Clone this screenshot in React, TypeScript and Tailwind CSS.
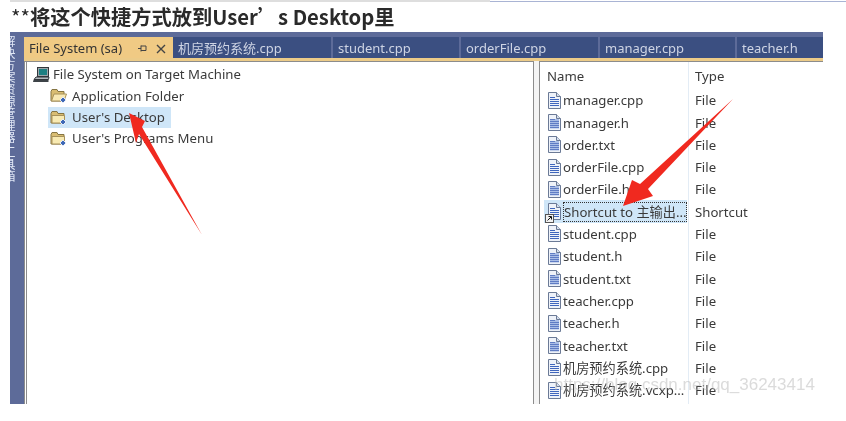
const UI = "font-['Noto_Sans','Noto_Sans_CJK_SC',sans-serif]";

function Doc({ dense }: { dense?: boolean }) {
  return (
    <svg width="14" height="17" viewBox="0 0 14 17" className="shrink-0">
      <path d="M1.5.5H9.5L13.5 4.5V16.5H1.5Z" fill="#eef2f9" stroke="#6b7a96" />
      <path d="M9.5.5V4.5H13.5" fill="#d5deec" stroke="#6b7a96" />
      {dense ? <rect x="3" y="5" width="9" height="9.5" fill="#a9bde6" /> : null}
      {[5, 7, 9, 11, 13].map((y) => (
        <path key={y} d={`M3 ${y + 0.5}H${y === 5 ? 8 : 12}`} stroke={dense ? "#5f7cc4" : "#3f66bd"} />
      ))}
    </svg>
  );
}

function Folder({ open }: { open?: boolean }) {
  return (
    <svg width="18" height="17" viewBox="0 0 18 17" className="shrink-0">
      <path d="M1 4.5 2 2.5H7L8 4.5H14V14H1Z" fill="#d9bd72" stroke="#857543" />
      {open ? (
        <path d="M1.5 14 4 7H16.5L14 14Z" fill="#f8e9b4" stroke="#a8925a" />
      ) : (
        <path d="M2 6.5H14.5V14H2Z" fill="#f8eab2" stroke="#a8925a" />
      )}
      <path d="M13 10 16 13 13 16 10 13Z" fill="#3f68b5" stroke="#e6edf8" />
    </svg>
  );
}

function Computer() {
  return (
    <svg width="19" height="17" viewBox="0 0 19 17" className="shrink-0">
      <rect x="5.5" y="1.5" width="11" height="9" fill="#9fa6ab" stroke="#32373c" />
      <rect x="7" y="3" width="8" height="6" fill="#1d7f82" />
      <path d="M4 11H17L16.5 13.5H2Z" fill="#b4babe" stroke="#32373c" />
      <path d="M1.5 14H16.5V16H1Z" fill="#3d4348" />
    </svg>
  );
}

function ShortcutBadge() {
  return (
    <svg width="9" height="9" viewBox="0 0 9 9" className="absolute left-[1px] bottom-[0px]">
      <rect x="0.5" y="0.5" width="8" height="8" fill="#f2f2f2" stroke="#555" />
      <path d="M2.5 6.5 6 3M3.5 2.5H6.5V5.5" fill="none" stroke="#111" />
    </svg>
  );
}

function Tab({ label, width }: { label: string; width: string }) {
  return (
    <div className={`${width} h-full bg-[#3b4f81] text-[#ced4e4] text-[13px] pl-[5px] pt-[2px] flex items-center shrink-0 whitespace-nowrap overflow-hidden`}>
      {label}
    </div>
  );
}

const files: { name: string; type?: string; dense?: boolean; shortcut?: boolean }[] = [
  { name: "manager.cpp" },
  { name: "manager.h", dense: true },
  { name: "order.txt", dense: true },
  { name: "orderFile.cpp" },
  { name: "orderFile.h", dense: true },
  { name: "Shortcut to 主输出...", type: "Shortcut", shortcut: true },
  { name: "student.cpp" },
  { name: "student.h", dense: true },
  { name: "student.txt", dense: true },
  { name: "teacher.cpp" },
  { name: "teacher.h", dense: true },
  { name: "teacher.txt", dense: true },
  { name: "机房预约系统.cpp" },
  { name: "机房预约系统.vcxp..." },
];

function TreeRow({ label, selected, icon }: { label: string; selected?: boolean; icon: React.ReactNode }) {
  return (
    <div className={`h-[21.3px] w-[123px] whitespace-nowrap flex items-center gap-[4px] ${selected ? "bg-[#cfe6f8]" : ""}`}>
      <span className="pl-[2px] flex">{icon}</span>
      <span className="pt-[1px]">{label}</span>
    </div>
  );
}

export default function App() {
  return (
    <div className={`relative w-[846px] h-[421px] bg-white overflow-hidden blur-[0.35px] ${UI}`}>
      <div className="flex h-[2px]">
        <div className="w-[480px] ml-[10px] bg-[#dedede]" />
        <div className="flex-1 border-b border-[#a9b4d4]" />
      </div>
      <div className="h-[30px] pl-[11px] pt-[1px] text-[20.25px] leading-[27px] font-bold text-[#2a2a2a] whitespace-nowrap font-['Noto_Sans_CJK_SC','Noto_Sans',sans-serif]">
        <span className="font-normal">**</span>将这个快捷方式放到User’s Desktop里
      </div>

      <div className="ml-[10px] w-[813px] h-[372px] bg-[#5d6b99] flex">
        <div className="w-[14px] shrink-0 overflow-hidden pt-[3px]">
          <div className="-ml-[9px] [writing-mode:vertical-rl] text-[12px] leading-[14px] text-[#dfe6f5] whitespace-nowrap">
            解决方案资源管理器 工具箱
          </div>
        </div>

        <div className="flex-1 min-w-0 flex flex-col">
          <div className="h-[21px] mt-[5px] flex gap-[2px] shrink-0">
            <div className="w-[149px] h-[21px] bg-[#f0ca84] text-[#333] text-[13px] pl-[5px] pt-[2px] flex items-center justify-between pr-[7px] shrink-0 whitespace-nowrap">
              <span>File System (sa)</span>
              <span className="flex items-center gap-[9px]">
                <svg width="9" height="9" viewBox="0 0 9 9">
                  <path d="M0 4.5H3M3 1.5V7.5M3 2H8V6.5H3" fill="none" stroke="#444" />
                </svg>
                <svg width="10" height="10" viewBox="0 0 10 10">
                  <path d="M1 1 9 9M9 1 1 9" stroke="#444" strokeWidth="1.4" />
                </svg>
              </span>
            </div>
            <div className="-ml-[2px] flex h-full gap-[2px]">
              <Tab label="机房预约系统.cpp" width="w-[158px]" />
              <Tab label="student.cpp" width="w-[126px]" />
              <Tab label="orderFile.cpp" width="w-[137px]" />
              <Tab label="manager.cpp" width="w-[135px]" />
              <Tab label="teacher.h" width="w-[86px]" />
            </div>
          </div>
          <div className="h-[3px] bg-[#eccb88] shrink-0" />

          <div className="flex-1 min-h-0 flex bg-[#f4f4f4]">
            <div className="w-[510px] shrink-0 border-l border-t border-r border-[#8c8c8c] pl-[1px] bg-white">
              <div className="h-full border-l border-[#8c8c8c] pt-[2px] pl-[5px] text-[13.2px] text-[#3a3a3a]">
                <div className="h-[21.3px] flex items-center gap-[2px] whitespace-nowrap">
                  <Computer />
                  <span className="pt-[1px]">File System on Target Machine</span>
                </div>
                <div className="pl-[16px] flex flex-col">
                  <TreeRow label="Application Folder" icon={<Folder open />} />
                  <TreeRow label="User's Desktop" selected icon={<Folder />} />
                  <TreeRow label="User's Programs Menu" icon={<Folder />} />
                </div>
              </div>
            </div>
            <div className="w-[5px] shrink-0" />
            <div className="flex-1 min-w-0 border-l border-t border-[#8c8c8c] bg-white text-[13.2px] text-[#3a3a3a] flex">
              <div className="w-[149px] shrink-0 border-r border-[#e3ecf5] flex flex-col pl-[4px] pr-[1px]">
                <div className="h-[27px] pl-[3px] pt-[2px] flex items-center shrink-0">Name</div>
                {files.map((f) => (
                  <div key={f.name} className={`relative h-[22.3px] flex items-center gap-[2px] pl-[3px] whitespace-nowrap shrink-0 ${f.shortcut ? "bg-[#cfe6f8]" : ""}`}>
                    <Doc dense={f.dense} />
                    <span className={f.shortcut ? "flex-1 border border-dotted border-[#333] h-[20px] leading-[19px] overflow-hidden" : "pt-[2px]"}>{f.name}</span>
                    {f.shortcut ? <ShortcutBadge /> : null}
                  </div>
                ))}
              </div>
              <div className="flex-1 min-w-0 flex flex-col pl-[6px]">
                <div className="h-[27px] pt-[2px] flex items-center shrink-0">Type</div>
                {files.map((f) => (
                  <div key={f.name} className="h-[22.3px] pt-[2px] flex items-center shrink-0">{f.type ?? "File"}</div>
                ))}
              </div>
            </div>
          </div>
        </div>
      </div>

      <svg className="absolute inset-0 pointer-events-none" width="846" height="421" viewBox="0 0 846 421">
        <polygon points="129,113 145,121 142,127 202,235 139,134 136,143" fill="#f0291f" />
        <polygon points="733,99 648,189 653,196 623,206 632,180 640,184" fill="#f0291f" />
      </svg>
      <div className="absolute left-[554px] top-[374px] text-[17px] leading-[22px] text-[#b8b8b8]/50 whitespace-nowrap font-['Liberation_Sans',sans-serif]">
        https://blog.csdn.net/qq_36243414
      </div>
    </div>
  );
}
